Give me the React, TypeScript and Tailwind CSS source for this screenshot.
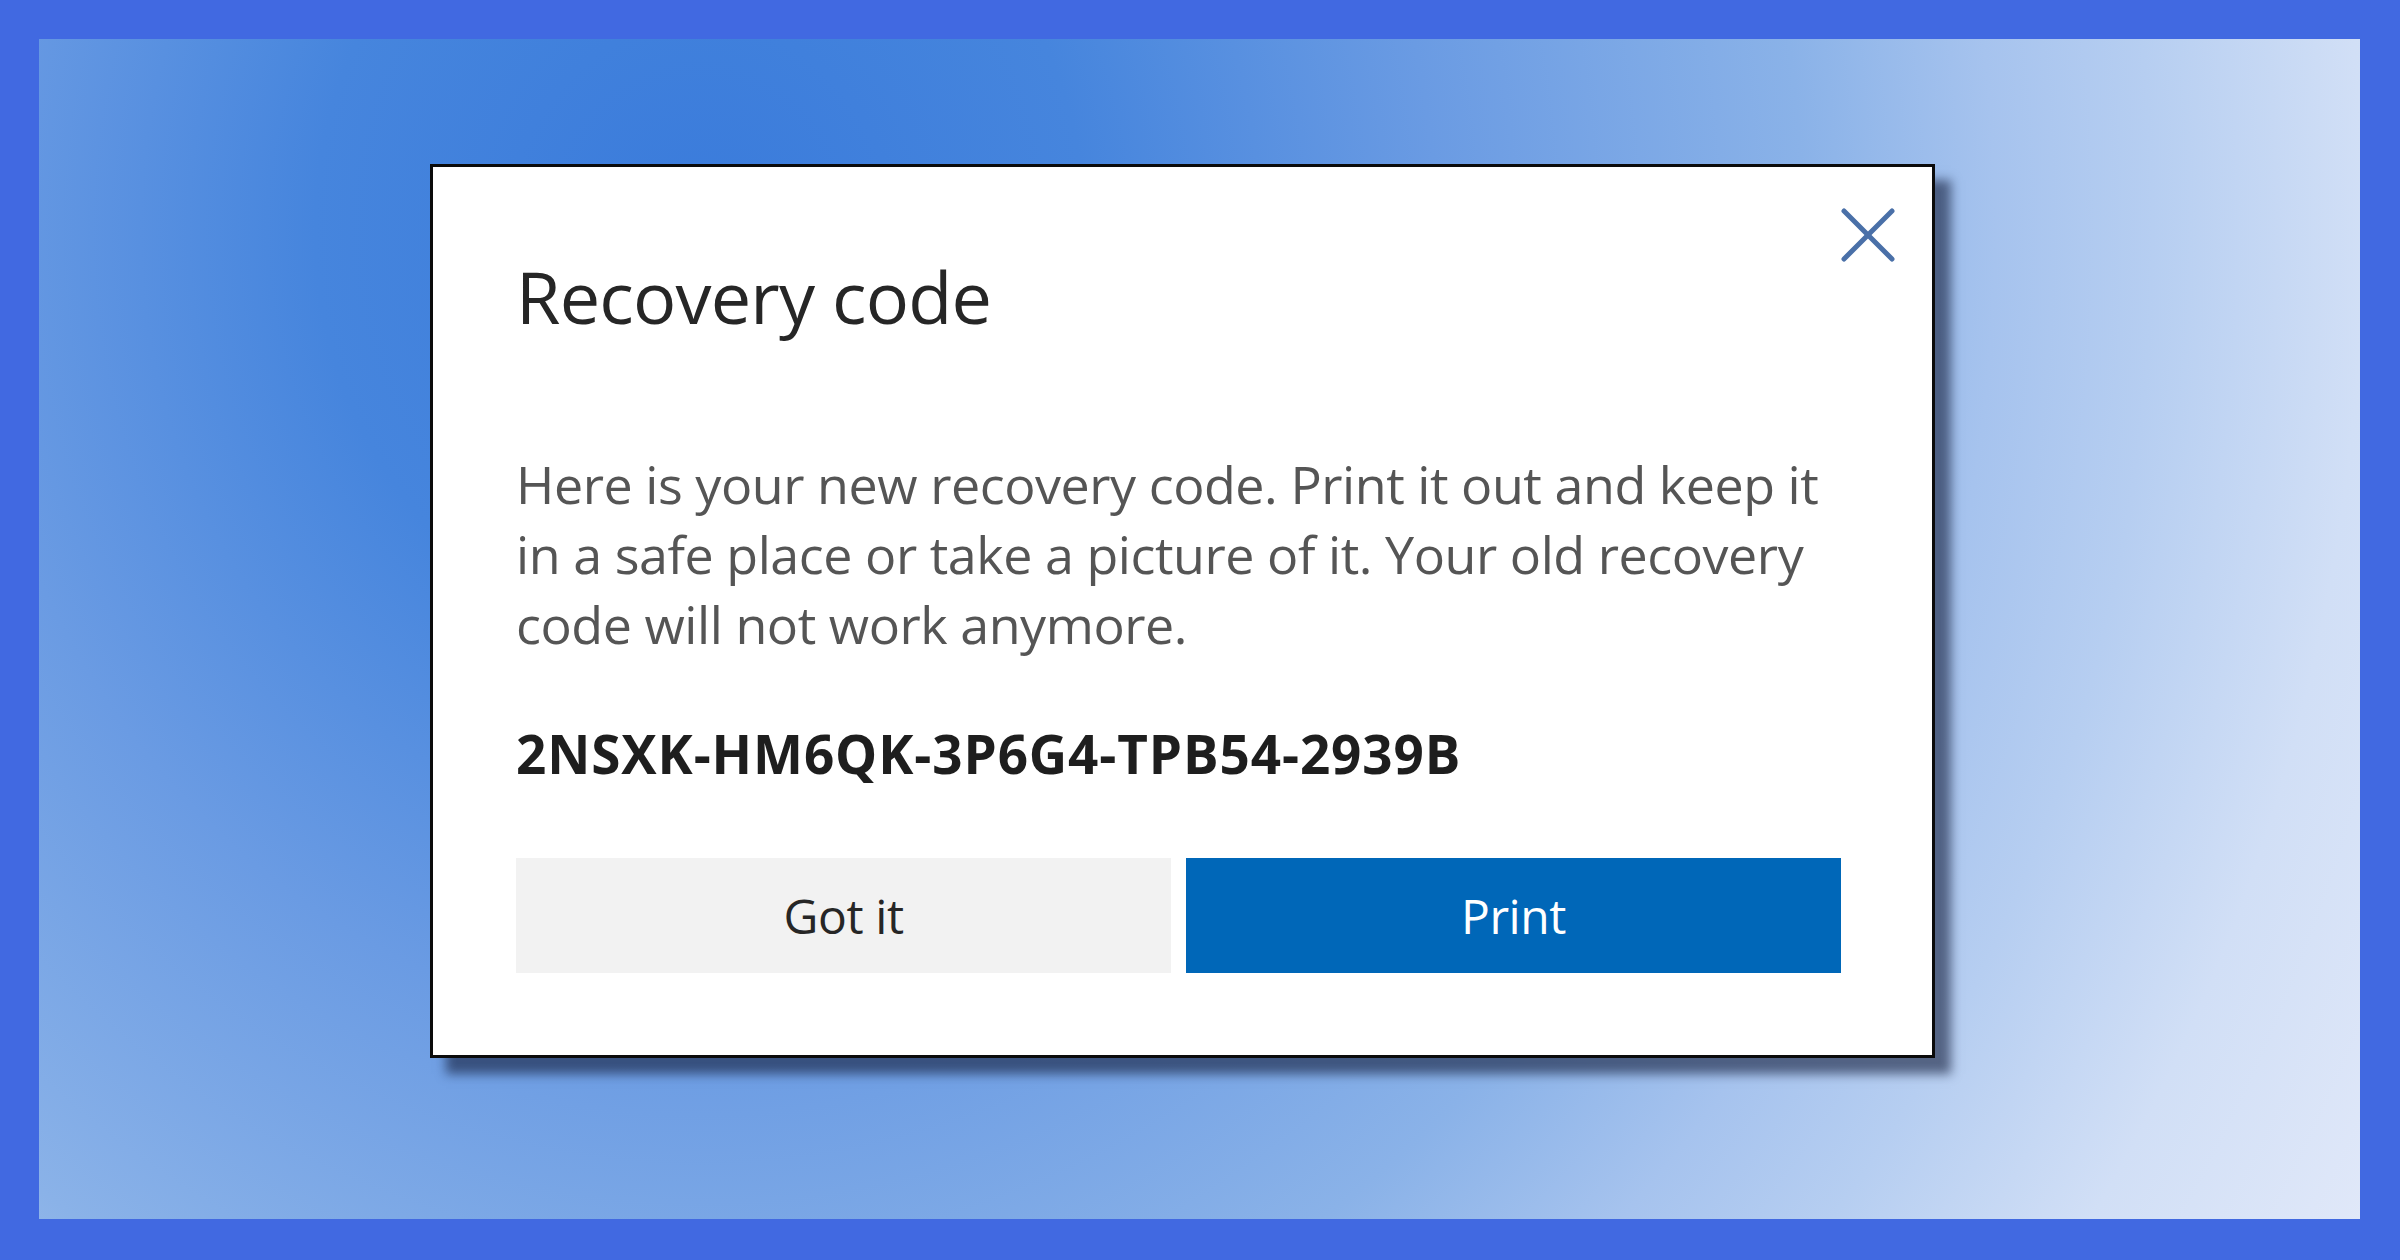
import React from "react";

const RecoveryDialog: React.FC = () => {
  return (
    <div className="relative w-[1505px] border-[3px] border-[#0b0b0b] bg-white pl-[83px] pr-[91px] pt-[89px] pb-[82px] shadow-[16px_16px_10px_rgba(20,30,60,0.6)]">
      <button
        aria-label="Close"
        className="absolute left-[1408px] top-[41px] flex h-[54px] w-[54px] items-center justify-center text-[#4a70a8]"
      >
        <svg width="54" height="54" viewBox="0 0 54 54" fill="none">
          <path
            d="M3 3 L51 51 M51 3 L3 51"
            stroke="currentColor"
            strokeWidth="5"
            strokeLinecap="round"
          />
        </svg>
      </button>

      <h2 className="text-[72px] leading-[80px] tracking-[-0.8px] text-[#262626]">
        Recovery code
      </h2>

      <p className="mt-[113px] whitespace-nowrap text-[52px] leading-[70px] tracking-[-0.45px] text-[#555555]">
        Here is your new recovery code. Print it out and keep it
        <br />
        in a safe place or take a picture of it. Your old recovery
        <br />
        code will not work anymore.
      </p>

      <p className="mt-[65px] text-[53px] font-bold leading-[60px] tracking-[0.9px] text-[#1e1e1e]">
        2NSXK-HM6QK-3P6G4-TPB54-2939B
      </p>

      <div className="mt-[74px] grid grid-cols-2 gap-[15px]">
        <button className="flex h-[115px] items-center justify-center bg-[#f2f2f2] text-[48px] tracking-[-0.4px] text-[#262626]">
          Got it
        </button>
        <button className="flex h-[115px] items-center justify-center bg-[#0067b8] text-[48px] tracking-[-0.4px] text-white">
          Print
        </button>
      </div>
    </div>
  );
};

export default function App() {
  return (
    <div
      className="h-[1260px] w-full bg-[#4169e1] pt-[39px] pl-[39px] pr-[40px] pb-[41px]"
      style={{ fontFamily: '"Open Sans", "Noto Sans", sans-serif' }}
    >
      <div className="flex h-full w-full items-start bg-[radial-gradient(ellipse_1750px_1900px_at_661px_191px,#3a7bdb_0%,#4685dd_22%,#6a9be3_42%,#8ab2e8_63%,#a6c3ee_74%,#b6cef1_83%,#d1dff6_95%,#e2e9f9_110%)] pl-[391px] pt-[125px]">
        <RecoveryDialog />
      </div>
    </div>
  );
}
